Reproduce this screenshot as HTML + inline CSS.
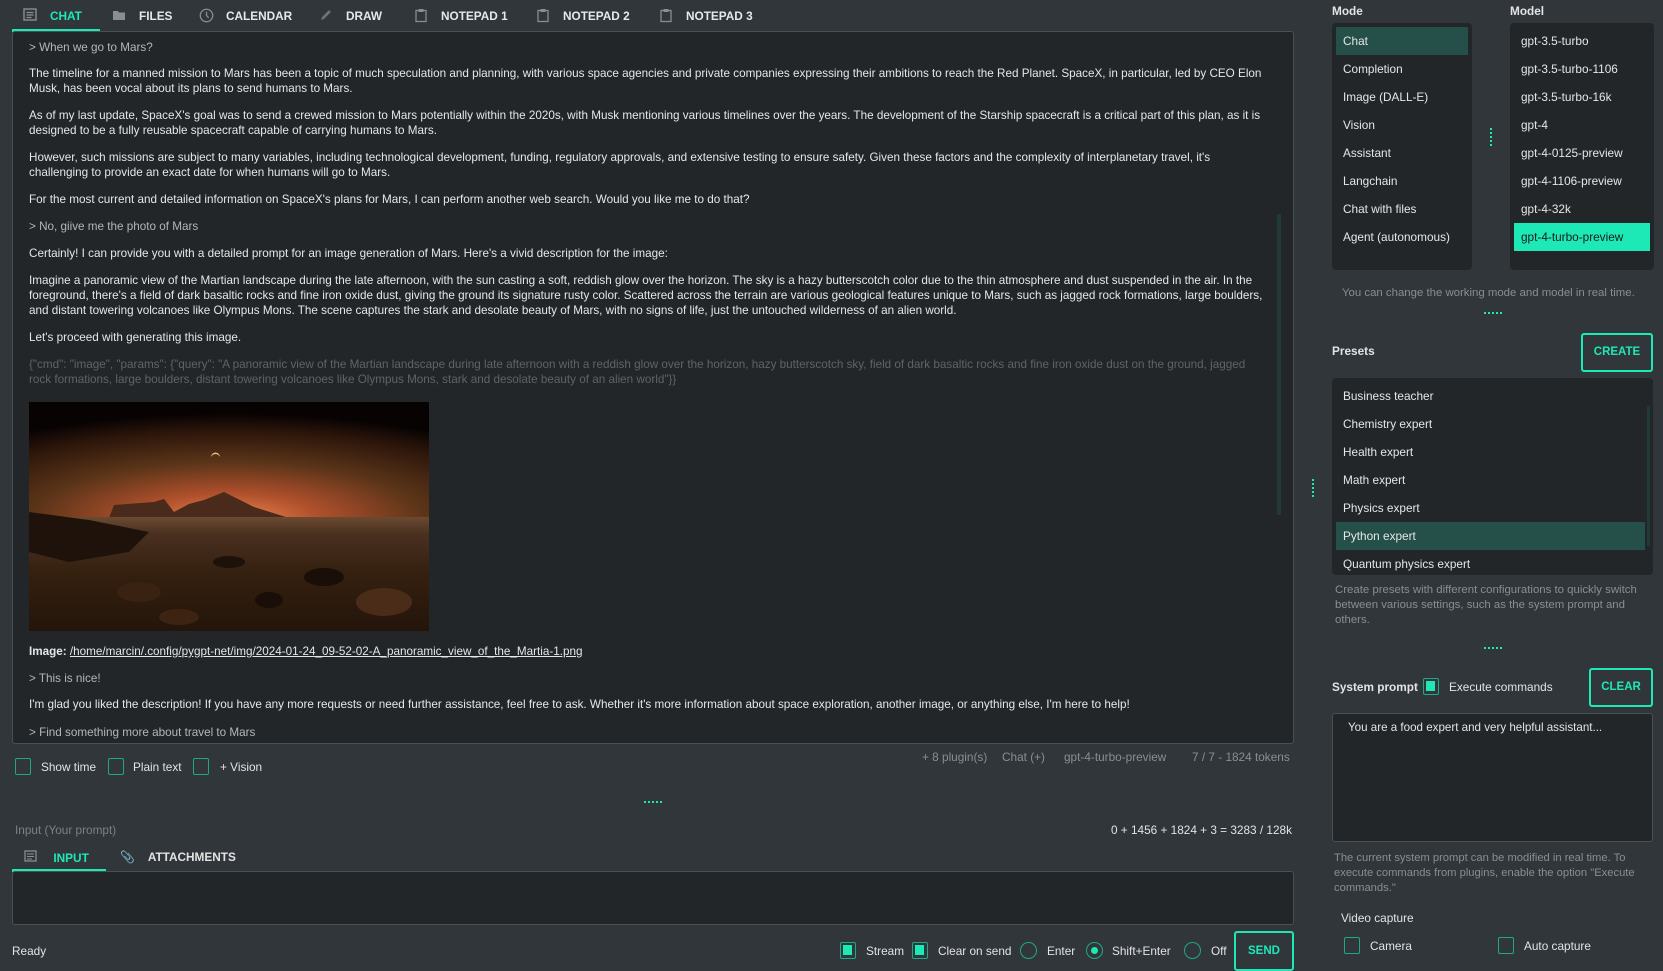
<!DOCTYPE html>
<html><head><meta charset="utf-8"><style>
*{margin:0;padding:0;box-sizing:border-box}
body{width:1663px;height:971px;background:#31363b;font-family:"Liberation Sans",sans-serif;color:#e3e3e3;position:relative;overflow:hidden;font-size:11.8px}
.a{position:absolute;white-space:nowrap}
.tab{position:absolute;top:9px;font-size:11.8px;font-weight:bold;color:#e8e8e8}
.tab svg{position:absolute;left:-27px;top:-1px}
.chat{position:absolute;left:12px;top:31px;width:1282px;height:713px;background:#232629;border:1px solid #4a4f54;border-radius:3px}
.l{position:absolute;left:16px;white-space:nowrap;font-size:11.7px;color:#e6e6e6}
.u{color:#b5b5b5}
.g{color:#5f6367}
.box{position:absolute;background:#232629;border-radius:4px}
.it{position:absolute;left:0;right:0;height:28px;line-height:28px;padding-left:11px;font-size:11.8px;color:#e6e6e6}
.sel{background:#245049}
.btn{position:absolute;border:2px solid #1de9b6;border-radius:3px;color:#1de9b6;font-weight:bold;font-size:11.5px;text-align:center}
.cb{position:absolute;width:16px;height:17px;border:1.5px solid #1fa888;border-radius:2px}
.cb.on::after{content:"";position:absolute;left:2px;top:2px;width:9px;height:10px;background:#1de9b6}
.rb{position:absolute;width:17px;height:17px;border:1.5px solid #1fa888;border-radius:50%}
.rb.on::after{content:"";position:absolute;left:3.5px;top:3.5px;width:7px;height:7px;border-radius:50%;background:#1de9b6}
.dots{position:absolute;width:18px;height:2px;background:repeating-linear-gradient(90deg,#1de9b6 0 2px,transparent 2px 4px)}
.muted{color:#8a8e92}
</style></head><body>

<div class="tab" style="left:50px;color:#1de9b6"><svg width="14" height="14" viewBox="0 0 14 14"><rect x="1" y="1" width="12" height="11" fill="none" stroke="#8a8e92" stroke-width="1.4"/><path d="M3.5 4.5h7M3.5 7h7M3.5 9.5h5" stroke="#8a8e92" stroke-width="1.2"/></svg>CHAT</div>
<div style="position:absolute;left:12px;top:29px;width:88px;height:3px;background:#1de9b6"></div>
<div class="tab" style="left:139px"><svg width="14" height="14" viewBox="0 0 14 14"><path d="M1 3h5l1 1.5h6V12H1z" fill="#8a8e92"/></svg>FILES</div>
<div class="tab" style="left:226px"><svg width="15" height="15" viewBox="0 0 14 14"><circle cx="7" cy="7" r="5.8" fill="none" stroke="#8a8e92" stroke-width="1.2"/><path d="M7 3.5V7l2 2" stroke="#8a8e92" stroke-width="1.2" fill="none"/></svg>CALENDAR</div>
<div class="tab" style="left:346px"><svg width="14" height="14" viewBox="0 0 14 14"><path d="M2 12l1-3 7-7 2 2-7 7z" fill="#6d7175"/></svg>DRAW</div>
<div class="tab" style="left:441px"><svg width="14" height="15" viewBox="0 0 14 15"><rect x="2" y="2.5" width="10" height="11" fill="none" stroke="#8a8e92" stroke-width="1.3"/><rect x="4.5" y="1" width="5" height="3" fill="#8a8e92"/></svg>NOTEPAD 1</div>
<div class="tab" style="left:563px"><svg width="14" height="15" viewBox="0 0 14 15"><rect x="2" y="2.5" width="10" height="11" fill="none" stroke="#8a8e92" stroke-width="1.3"/><rect x="4.5" y="1" width="5" height="3" fill="#8a8e92"/></svg>NOTEPAD 2</div>
<div class="tab" style="left:686px"><svg width="14" height="15" viewBox="0 0 14 15"><rect x="2" y="2.5" width="10" height="11" fill="none" stroke="#8a8e92" stroke-width="1.3"/><rect x="4.5" y="1" width="5" height="3" fill="#8a8e92"/></svg>NOTEPAD 3</div>

<div class="chat">
<div class="l u" style="top:9px">&gt; When we go to Mars?</div>
<div class="l" style="top:35px">The timeline for a manned mission to Mars has been a topic of much speculation and planning, with various space agencies and private companies expressing their ambitions to reach the Red Planet. SpaceX, in particular, led by CEO Elon</div>
<div class="l" style="top:50px">Musk, has been vocal about its plans to send humans to Mars.</div>
<div class="l" style="top:77px">As of my last update, SpaceX's goal was to send a crewed mission to Mars potentially within the 2020s, with Musk mentioning various timelines over the years. The development of the Starship spacecraft is a critical part of this plan, as it is</div>
<div class="l" style="top:92px">designed to be a fully reusable spacecraft capable of carrying humans to Mars.</div>
<div class="l" style="top:119px">However, such missions are subject to many variables, including technological development, funding, regulatory approvals, and extensive testing to ensure safety. Given these factors and the complexity of interplanetary travel, it's</div>
<div class="l" style="top:134px">challenging to provide an exact date for when humans will go to Mars.</div>
<div class="l" style="top:161px">For the most current and detailed information on SpaceX's plans for Mars, I can perform another web search. Would you like me to do that?</div>
<div class="l u" style="top:188px">&gt; No, giive me the photo of Mars</div>
<div class="l" style="top:215px">Certainly! I can provide you with a detailed prompt for an image generation of Mars. Here's a vivid description for the image:</div>
<div class="l" style="top:242px">Imagine a panoramic view of the Martian landscape during the late afternoon, with the sun casting a soft, reddish glow over the horizon. The sky is a hazy butterscotch color due to the thin atmosphere and dust suspended in the air. In the</div>
<div class="l" style="top:257px">foreground, there's a field of dark basaltic rocks and fine iron oxide dust, giving the ground its signature rusty color. Scattered across the terrain are various geological features unique to Mars, such as jagged rock formations, large boulders,</div>
<div class="l" style="top:272px">and distant towering volcanoes like Olympus Mons. The scene captures the stark and desolate beauty of Mars, with no signs of life, just the untouched wilderness of an alien world.</div>
<div class="l" style="top:299px">Let's proceed with generating this image.</div>
<div class="l g" style="top:326px">{"cmd": "image", "params": {"query": "A panoramic view of the Martian landscape during late afternoon with a reddish glow over the horizon, hazy butterscotch sky, field of dark basaltic rocks and fine iron oxide dust on the ground, jagged</div>
<div class="l g" style="top:341px">rock formations, large boulders, distant towering volcanoes like Olympus Mons, stark and desolate beauty of an alien world"}}</div>
<svg style="position:absolute;left:16px;top:370px" width="400" height="229" viewBox="0 0 400 229">
<defs>
<radialGradient id="sky" cx="0.5" cy="1" r="0.9"><stop offset="0" stop-color="#f08a50"/><stop offset="0.25" stop-color="#b0502c"/><stop offset="0.55" stop-color="#5a3418"/><stop offset="0.85" stop-color="#2a140a"/><stop offset="1" stop-color="#080303"/></radialGradient>
<linearGradient id="gr" x1="0" y1="0" x2="0" y2="1"><stop offset="0" stop-color="#6a4a30"/><stop offset="0.15" stop-color="#4a3020"/><stop offset="0.5" stop-color="#34200f"/><stop offset="1" stop-color="#24140a"/></linearGradient>
</defs>
<rect width="400" height="118" fill="url(#sky)"/>
<path d="M80 116 L85 103 L125 100 L135 97 L145 110 L160 102 L175 98 L195 90 L225 105 L260 116 Z" fill="#4a2a1a"/>
<rect y="115" width="400" height="114" fill="url(#gr)"/>
<path d="M0 110 L60 118 L120 130 L100 150 L40 160 L0 150Z" fill="#1e120a"/>
<ellipse cx="110" cy="190" rx="22" ry="10" fill="#3a2212"/>
<ellipse cx="355" cy="200" rx="28" ry="14" fill="#4a2c18"/>
<ellipse cx="295" cy="175" rx="20" ry="9" fill="#1a0e08"/>
<ellipse cx="150" cy="215" rx="20" ry="8" fill="#3d2412"/>
<ellipse cx="240" cy="198" rx="14" ry="8" fill="#1a0e08"/>
<ellipse cx="200" cy="160" rx="16" ry="6" fill="#1e110a"/>
<path d="M182 55 a5 5 0 0 1 9 0 a4 4 0 0 0 -9 0z" fill="#e8c080"/>
</svg>
<div class="l" style="top:613px"><b>Image:</b> <span style="text-decoration:underline">/home/marcin/.config/pygpt-net/img/2024-01-24_09-52-02-A_panoramic_view_of_the_Martia-1.png</span></div>
<div class="l u" style="top:640px">&gt; This is nice!</div>
<div class="l" style="top:666px">I'm glad you liked the description! If you have any more requests or need further assistance, feel free to ask. Whether it's more information about space exploration, another image, or anything else, I'm here to help!</div>
<div class="l u" style="top:694px">&gt; Find something more about travel to Mars</div>
<div style="position:absolute;left:1264px;top:182px;width:4px;height:301px;background:#1f3b34"></div>
</div>

<div class="cb" style="left:15px;top:758px"></div><div class="a" style="left:41px;top:760px">Show time</div>
<div class="cb" style="left:108px;top:758px"></div><div class="a" style="left:133px;top:760px">Plain text</div>
<div class="cb" style="left:193px;top:758px"></div><div class="a" style="left:220px;top:760px">+ Vision</div>
<div class="a muted" style="left:922px;top:750px">+ 8 plugin(s)</div>
<div class="a muted" style="left:1002px;top:750px">Chat (+)</div>
<div class="a muted" style="left:1064px;top:750px">gpt-4-turbo-preview</div>
<div class="a muted" style="left:1192px;top:750px">7 / 7 - 1824 tokens</div>
<div class="dots" style="left:644px;top:801px"></div>
<div class="a muted" style="left:15px;top:823px;color:#7d8185">Input (Your prompt)</div>
<div class="a" style="right:371px;top:823px">0 + 1456 + 1824 + 3 = 3283 / 128k</div>
<div class="a" style="left:24px;top:850px;font-weight:bold;font-size:11.8px;color:#1de9b6"><svg style="vertical-align:-2px" width="13" height="14" viewBox="0 0 13 14"><rect x="1" y="1" width="11" height="10" fill="none" stroke="#8a8e92" stroke-width="1.3"/><path d="M3 4h7M3 6.5h7M3 9h5" stroke="#8a8e92"/></svg>&nbsp;&nbsp;&nbsp;&nbsp;&nbsp;INPUT</div>
<div style="position:absolute;left:12px;top:869px;width:94px;height:3px;background:#1de9b6"></div>
<div class="a" style="left:120px;top:850px;font-weight:bold;font-size:11.8px"><span style="color:#8a8e92">&#128206;</span>&nbsp;&nbsp;&nbsp;&nbsp;ATTACHMENTS</div>
<div style="position:absolute;left:12px;top:871px;width:1282px;height:54px;background:#232629;border:1px solid #4a4f54;border-radius:3px"></div>
<div class="a" style="left:12px;top:944px">Ready</div>
<div class="cb on" style="left:840px;top:942px"></div><div class="a" style="left:866px;top:944px">Stream</div>
<div class="cb on" style="left:912px;top:942px"></div><div class="a" style="left:938px;top:944px">Clear on send</div>
<div class="rb" style="left:1020px;top:942px"></div><div class="a" style="left:1047px;top:944px">Enter</div>
<div class="rb on" style="left:1086px;top:942px"></div><div class="a" style="left:1112px;top:944px">Shift+Enter</div>
<div class="rb" style="left:1184px;top:942px"></div><div class="a" style="left:1211px;top:944px">Off</div>
<div class="btn" style="left:1234px;top:931px;width:60px;height:40px;line-height:36px">SEND</div>

<div style="position:absolute;left:1312px;top:479px;width:2px;height:18px;background:repeating-linear-gradient(180deg,#1de9b6 0 2px,transparent 2px 4px)"></div>

<div class="a" style="left:1332px;top:4px;font-weight:bold;font-size:11.8px">Mode</div>
<div class="a" style="left:1510px;top:4px;font-weight:bold;font-size:11.8px">Model</div>
<div class="box" style="left:1332px;top:23px;width:140px;height:247px">
<div class="it sel" style="top:4px;left:4px;right:4px;padding-left:7px">Chat</div>
<div class="it" style="top:32px">Completion</div>
<div class="it" style="top:60px">Image (DALL-E)</div>
<div class="it" style="top:88px">Vision</div>
<div class="it" style="top:116px">Assistant</div>
<div class="it" style="top:144px">Langchain</div>
<div class="it" style="top:172px">Chat with files</div>
<div class="it" style="top:200px">Agent (autonomous)</div>
</div>
<div style="position:absolute;left:1490px;top:128px;width:2px;height:18px;background:repeating-linear-gradient(180deg,#1de9b6 0 2px,transparent 2px 4px)"></div>
<div class="box" style="left:1510px;top:23px;width:144px;height:247px">
<div class="it" style="top:4px">gpt-3.5-turbo</div>
<div class="it" style="top:32px">gpt-3.5-turbo-1106</div>
<div class="it" style="top:60px">gpt-3.5-turbo-16k</div>
<div class="it" style="top:88px">gpt-4</div>
<div class="it" style="top:116px">gpt-4-0125-preview</div>
<div class="it" style="top:144px">gpt-4-1106-preview</div>
<div class="it" style="top:172px">gpt-4-32k</div>
<div class="it" style="top:200px;left:4px;right:4px;padding-left:7px;background:#1de9b6;color:#1a1a1a">gpt-4-turbo-preview</div>
</div>
<div class="a muted" style="left:1342px;top:287px;font-size:11.4px">You can change the working mode and model in real time.</div>
<div class="dots" style="left:1484px;top:312px"></div>

<div class="a" style="left:1332px;top:344px;font-weight:bold;font-size:11.8px">Presets</div>
<div class="btn" style="left:1581px;top:333px;width:72px;height:39px;line-height:35px">CREATE</div>
<div class="box" style="left:1332px;top:378px;width:321px;height:197px">
<div class="it" style="top:4px">Business teacher</div>
<div class="it" style="top:32px">Chemistry expert</div>
<div class="it" style="top:60px">Health expert</div>
<div class="it" style="top:88px">Math expert</div>
<div class="it" style="top:116px">Physics expert</div>
<div class="it sel" style="top:144px;left:4px;right:8px;padding-left:7px">Python expert</div>
<div class="it" style="top:172px">Quantum physics expert</div>
<div style="position:absolute;right:3px;top:28px;width:3px;height:140px;background:#1f3b34"></div>
</div>
<div class="a muted" style="left:1335px;top:583px;font-size:11.4px;line-height:15px;white-space:normal;width:320px">Create presets with different configurations to quickly switch between various settings, such as the system prompt and others.</div>
<div class="dots" style="left:1484px;top:647px"></div>

<div class="a" style="left:1332px;top:680px;font-weight:bold;font-size:11.8px">System prompt</div>
<div class="cb on" style="left:1423px;top:678px"></div>
<div class="a" style="left:1449px;top:680px">Execute commands</div>
<div class="btn" style="left:1589px;top:668px;width:64px;height:39px;line-height:35px">CLEAR</div>
<div style="position:absolute;left:1332px;top:713px;width:321px;height:129px;background:#232629;border:1px solid #4a4f54;border-radius:3px"></div>
<div class="a" style="left:1348px;top:721px;font-size:11.6px">You are a food expert and very helpful assistant...</div>
<div class="a muted" style="left:1334px;top:851px;font-size:11.2px;line-height:15px;white-space:normal;width:322px">The current system prompt can be modified in real time. To execute commands from plugins, enable the option "Execute commands."</div>
<div class="a" style="left:1341px;top:911px">Video capture</div>
<div class="cb" style="left:1344px;top:937px"></div><div class="a" style="left:1370px;top:939px">Camera</div>
<div class="cb" style="left:1498px;top:937px"></div><div class="a" style="left:1524px;top:939px">Auto capture</div>
</body></html>
